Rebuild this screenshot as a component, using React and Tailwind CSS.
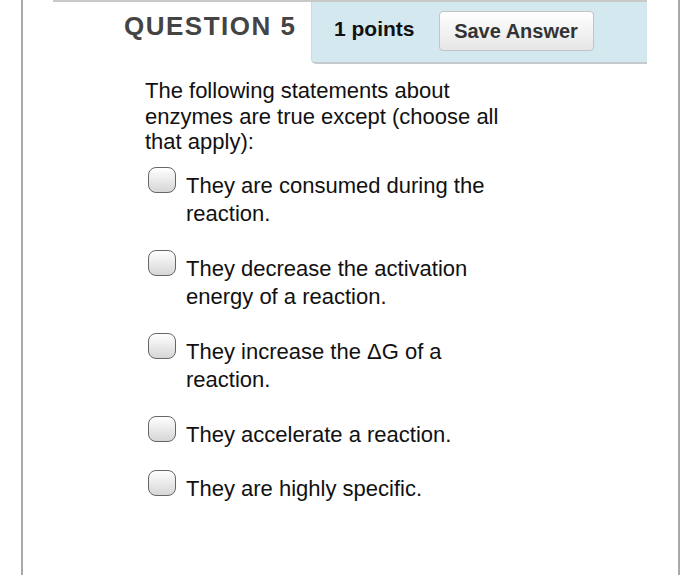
export default function App() {
  const options = [
    "They are consumed during the reaction.",
    "They decrease the activation energy of a reaction.",
    "They increase the \u0394G of a reaction.",
    "They accelerate a reaction.",
    "They are highly specific.",
  ];
  return (
    <div className="w-[700px] h-[575px] bg-white overflow-hidden font-['Liberation_Sans',Arial,sans-serif]">
      <div className="ml-[21px] w-[659px] h-[575px] border-x-2 border-[#a9a9a9]">
        <div className="ml-[30px] w-[594px] border-t-2 border-[#c9c9c9] flex">
          <div className="w-[258px] pl-[71px] pt-[9px]">
            <div className="text-[26px] leading-[30px] font-bold tracking-[1.5px] text-[#444]">QUESTION 5</div>
          </div>
          <div className="flex-1 h-[62px] bg-[#d3e8ef] rounded-bl-[5px] border-b-2 border-l border-b-[#c3cbcf] border-l-[#c6dbe2] flex items-start pl-[22px]">
            <div className="mt-[15px] text-[21px] leading-[24px] font-bold text-[#111]">1 points</div>
            <div className="ml-[24px] mt-[9px] w-[155px] h-[40px] rounded-[4px] border border-[#c4c4c4] bg-gradient-to-b from-[#ffffff] to-[#e6e6e6] flex items-center justify-center text-[20px] font-bold text-[#333]">
              Save Answer
            </div>
          </div>
        </div>
        <div className="ml-[122px] mt-[14px] w-[365px] text-[22px] leading-[25.5px] text-[#111]">
          The following statements about enzymes are true except (choose all that apply):
        </div>
        <div className="ml-[125px] mt-[17px] flex flex-col gap-[26px]">
          {options.map((o) => (
            <div key={o} className="flex items-start">
              <div className="-mt-[5px] w-[28px] h-[26px] shrink-0 rounded-[8px] border-[1.5px] border-[#666] bg-gradient-to-b from-[#ffffff] to-[#d6d6d6]" />
              <div className="ml-[10px] w-[315px] text-[22px] leading-[28.5px] text-[#111]">{o}</div>
            </div>
          ))}
        </div>
      </div>
    </div>
  );
}
